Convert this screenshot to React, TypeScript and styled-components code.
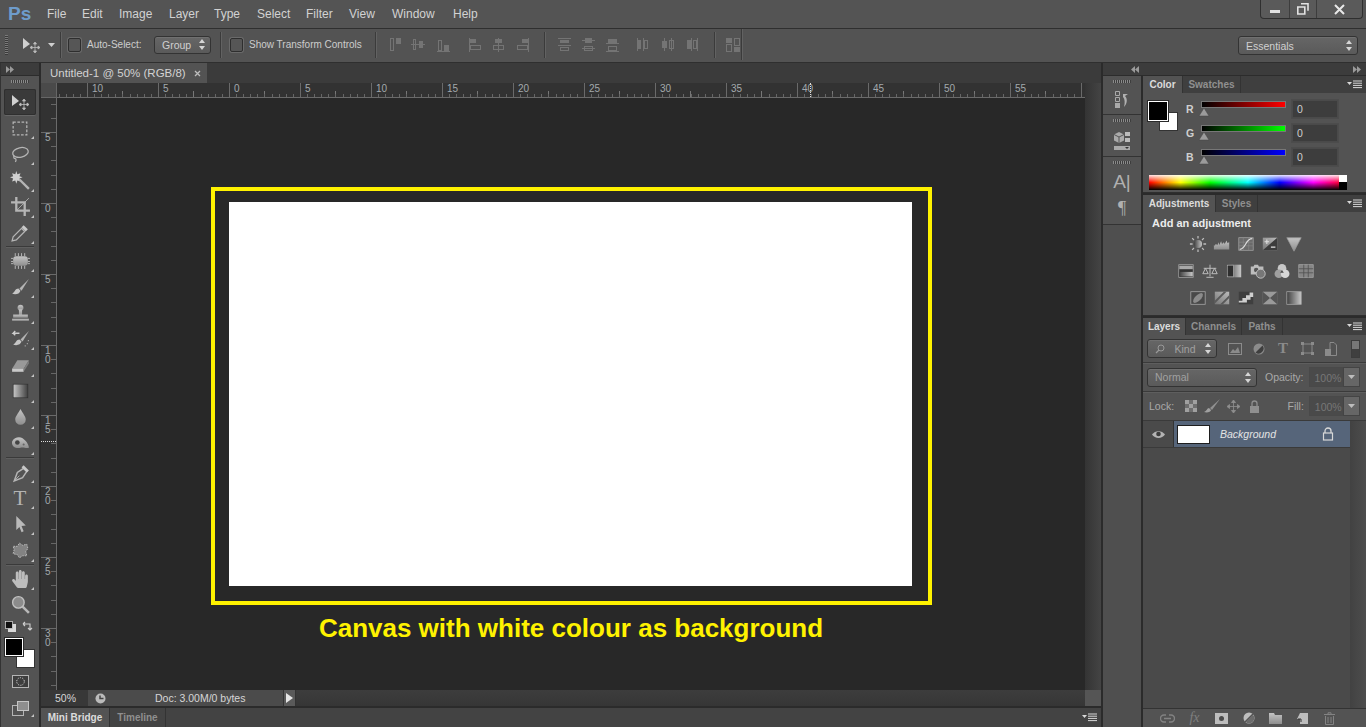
import React, { FunctionComponent, ReactNode } from 'react';
import styled, { createGlobalStyle } from 'styled-components';
import { FaHandPaper } from 'react-icons/fa';

const GlobalStyle = createGlobalStyle`
    html, body {
        margin: 0;
        padding: 0;
        background: #535353;
        font-family: "Liberation Sans", Arial, sans-serif;
    }
    * {
        box-sizing: border-box;
    }
`;

const Root = styled.div`
    width: 1366px;
    height: 727px;
    overflow: hidden;
    display: flex;
    flex-direction: column;
    background: #535353;
    color: #cfcfcf;
`;

const Svg = styled.svg<{ $w?: number; $h?: number }>`
    width: ${(p) => p.$w || 18}px;
    height: ${(p) => p.$h || p.$w || 18}px;
    display: block;
    flex: none;
`;

/* ---------- menu ---------- */
const MenuBar = styled.div`
    height: 29px;
    flex: none;
    display: flex;
    align-items: flex-start;
    border-bottom: 1px solid #2f2f2f;
    background: #545454;
`;
const Logo = styled.div`
    width: 47px;
    padding: 3px 0 0 8px;
    font-size: 19px;
    line-height: 22px;
    font-weight: bold;
    color: #6e9ccb;
`;
const MenuItem = styled.div<{ $w: number }>`
    width: ${(p) => p.$w}px;
    padding-top: 7px;
    font-size: 12px;
    line-height: 14px;
    color: #d2d2d2;
`;
const WindowButtons = styled.div`
    margin-left: auto;
    margin-right: 3px;
    height: 19px;
    display: flex;
    background: #5a5a5a;
    border: 1px solid #2f2f2f;
    border-top: 0;
    border-radius: 0 0 4px 4px;
`;
const WindowButton = styled.div<{ $w: number }>`
    width: ${(p) => p.$w}px;
    display: flex;
    align-items: center;
    justify-content: center;
    border-left: 1px solid #3d3d3d;
    &:first-child {
        border-left: 0;
    }
`;

/* ---------- options ---------- */
const OptionsBar = styled.div`
    height: 34px;
    flex: none;
    display: flex;
    align-items: center;
    padding-bottom: 2px;
    border-bottom: 1px solid #2f2f2f;
    background: #535353;
    position: relative;
`;
const OptionsGrip = styled.div`
    width: 3px;
    height: 20px;
    margin: 0 13px 0 5px;
    background: repeating-linear-gradient(180deg, #7a7a7a 0 1px, #3a3a3a 1px 2px);
`;
const OptionsDivider = styled.div<{ $ml: number; $mr: number; $tall?: boolean }>`
    width: 1px;
    align-self: ${(p) => (p.$tall ? 'stretch' : 'center')};
    height: ${(p) => (p.$tall ? 'auto' : '26px')};
    margin: ${(p) => (p.$tall ? '0 0 -2px' : '0')} ${(p) => p.$mr}px ${(p) => (p.$tall ? '-2px' : '0')} ${(p) => p.$ml}px;
    background: #3b3b3b;
    box-shadow: 1px 0 0 #626262;
`;
const Caret = styled(Svg)`
    margin-left: 7px;
`;
const Check = styled.div`
    width: 13px;
    height: 14px;
    flex: none;
    border: 1px solid #2e2e2e;
    border-radius: 2px;
    background: #565656;
    box-shadow: 0 0 0 1px #6a6a6a;
`;
const OptionLabel = styled.span<{ $ml: number; $w?: number }>`
    margin-left: ${(p) => p.$ml}px;
    width: ${(p) => (p.$w ? `${p.$w}px` : 'auto')};
    font-size: 10px;
    color: #cdcdcd;
    white-space: nowrap;
`;
const SelectBox = styled.div<{ $w: number; $h?: number; $dim?: boolean }>`
    width: ${(p) => p.$w}px;
    height: ${(p) => p.$h || 19}px;
    flex: none;
    display: flex;
    align-items: center;
    justify-content: space-between;
    padding: 0 5px 0 7px;
    font-size: 10.5px;
    color: ${(p) => (p.$dim ? '#a0a0a0' : '#d0d0d0')};
    background: linear-gradient(180deg, #666 0%, #5a5a5a 100%);
    border: 1px solid #333;
    border-radius: 3px;
    box-shadow: inset 0 1px 0 #707070;
`;
const Stepper = () => (
    <Svg $w={6} $h={11} viewBox='0 0 6 11'>
        <path d='M3 0l3 4H0zM3 11L0 7h6z' fill='#d5d5d5' />
    </Svg>
);
const AlignSlot = styled.div<{ $ml: number }>`
    margin-left: ${(p) => p.$ml}px;
`;
const WorkspaceSelect = styled(SelectBox)`
    position: absolute;
    right: 8px;
    top: 7px;
`;

/* ---------- workspace ---------- */
const Workspace = styled.div`
    flex: 1;
    min-height: 0;
    display: flex;
    background: #2b2b2b;
`;
const Strip = styled.div<{ $right?: boolean }>`
    height: 13px;
    flex: none;
    display: flex;
    align-items: center;
    justify-content: ${(p) => (p.$right ? 'space-between' : 'flex-start')};
    background: #3c3c3c;
    border-bottom: 1px solid #2c2c2c;
    padding: ${(p) => (p.$right ? '0 5px 0 28px' : '0 0 0 5px')};
`;
const DoubleArrow = ({ left }: { left?: boolean }) => (
    <Svg $w={8} $h={7} viewBox='0 0 8 7'>
        <path d={left ? 'M4 0v7L0 3.500zM8 0v7L4 3.500z' : 'M0 0v7l4-3.500zM4 0v7l4-3.500z'} fill='#9a9a9a' />
    </Svg>
);
const Grip = styled.div`
    width: 18px;
    height: 3px;
    flex: none;
    margin: 4px auto 5px;
    background: repeating-linear-gradient(90deg, #8a8a8a 0 1px, #3d3d3d 1px 2px);
`;
const ToolGrip = styled(Grip)`
    margin-bottom: 6px;
`;

/* tools */
const ToolsColumn = styled.div`
    width: 39px;
    flex: none;
    margin-right: 2px;
    display: flex;
    flex-direction: column;
    background: #535353;
    border-left: 1px solid #333;
`;
const ToolButton = styled.div<{ $active?: boolean; $flyout?: boolean }>`
    height: 26.150px;
    flex: none;
    margin: 0 3px;
    display: flex;
    align-items: center;
    justify-content: center;
    position: relative;
    border-radius: 2px;
    ${(p) =>
        p.$active
            ? 'background: #3a3a3a; box-shadow: inset 0 0 0 1px #2f2f2f, 0 1px 0 #666;'
            : ''}
    ${(p) =>
        p.$flyout
            ? `&::after {
                content: '';
                position: absolute;
                right: 2px;
                bottom: 2px;
                border-style: solid;
                border-width: 0 0 3px 3px;
                border-color: transparent transparent #c4c4c4 transparent;
            }`
            : ''}
`;
const ModeButton = styled(ToolButton)`
    margin: 0;
    width: 32px;
    height: 20px;
`;
const ToolRule = styled.div`
    height: 2px;
    flex: none;
    margin: 0 5px;
    border-top: 1px solid #3a3a3a;
    border-bottom: 1px solid #5f5f5f;
`;
const ToolLetter = styled.span`
    font-family: "Liberation Serif", serif;
    font-size: 21px;
    line-height: 21px;
    color: #b4b4b4;
`;
const SmallColors = styled.div`
    height: 16px;
    margin: 1px 6px 0 4px;
    flex: none;
    display: flex;
    align-items: center;
    justify-content: space-between;
`;
const ColorStack = styled.div`
    width: 30px;
    height: 30px;
    flex: none;
    margin: 3px 0 0 4px;
    position: relative;
`;
const ColorChip = styled.div<{ $color: string; $front?: boolean; $size: number }>`
    position: absolute;
    width: ${(p) => p.$size}px;
    height: ${(p) => p.$size}px;
    background: ${(p) => p.$color};
    border: 1px solid ${(p) => (p.$front ? '#fff' : '#333')};
    ${(p) =>
        p.$front
            ? 'left: 0; top: 0; z-index: 1; box-shadow: 0 0 0 1px #2a2a2a;'
            : 'right: 0; bottom: 0;'}
`;
const ModeSlot = styled.div<{ $mt: number }>`
    margin-top: ${(p) => p.$mt}px;
    flex: none;
    display: flex;
    justify-content: center;
`;

/* document */
const DocColumn = styled.div`
    width: 1060px;
    flex: none;
    display: flex;
    flex-direction: column;
`;
const TabBar = styled.div`
    height: 20px;
    flex: none;
    display: flex;
    background: #3b3b3b;
`;
const DocTab = styled.div`
    width: 166px;
    display: flex;
    align-items: center;
    justify-content: space-between;
    padding: 0 6px 0 9px;
    background: #535353;
    font-size: 11.5px;
    font-weight: 500;
    color: #d2d2d2;
    white-space: nowrap;
`;
const DocBody = styled.div`
    flex: 1;
    min-height: 0;
    display: flex;
`;
const DocInner = styled.div`
    width: 1044px;
    flex: none;
    display: flex;
    flex-direction: column;
`;
const RulerRow = styled.div`
    height: 15px;
    flex: none;
    display: flex;
    background: #323232;
`;
const RulerCorner = styled.div`
    width: 16px;
    flex: none;
    background: #4a4a4a;
    background-image: radial-gradient(#5c5c5c 0.5px, transparent 0.6px);
    background-size: 2px 2px;
    border-bottom: 1px solid #666;
    border-right: 1px solid #666;
`;
const TopRuler = styled.div`
    flex: 1;
    display: flex;
    overflow: hidden;
    position: relative;
    border-bottom: 1px solid #6a6a6a;
`;
const TopCell = styled.div<{ $lead?: number }>`
    width: 71px;
    flex: none;
    margin-left: ${(p) => p.$lead || 0}px;
    padding: 0 0 0 4px;
    font-size: 10px;
    line-height: 12px;
    color: #a3a9ad;
    border-left: 1px solid #6a6a6a;
    background-image:
        repeating-linear-gradient(90deg, transparent 0 6.100px, #666 6.100px 7.100px),
        linear-gradient(90deg, transparent 34px, #777 34px 35px, transparent 35px);
    background-size: 100% 3px, 100% 6px;
    background-position: bottom left, bottom left;
    background-repeat: no-repeat;
`;
const Marker = styled.div`
    position: absolute;
    top: 0;
    bottom: 0;
    left: 753px;
    border-left: 1px dotted #ddd;
`;
const MainRow = styled.div`
    flex: 1;
    min-height: 0;
    display: flex;
`;
const LeftRuler = styled.div`
    width: 16px;
    flex: none;
    overflow: hidden;
    position: relative;
    background: #323232;
    border-right: 1px solid #6a6a6a;
`;
const LeftCell = styled.div<{ $lead?: number }>`
    height: 70.900px;
    margin-top: ${(p) => p.$lead || 0}px;
    padding: 0 0 0 4px;
    border-top: 1px solid #6a6a6a;
    background-image: repeating-linear-gradient(180deg, transparent 0 13.200px, #666 13.200px 14.180px);
    background-size: 5px 100%;
    background-position: top right;
    background-repeat: no-repeat;
`;
const LeftLabel = styled.div`
    width: 7px;
    word-break: break-all;
    font-size: 10px;
    line-height: 9px;
    color: #a3a9ad;
`;
const LeftMarker = styled.div`
    position: absolute;
    left: 0;
    right: 0;
    top: 343px;
    border-top: 1px dotted #ddd;
`;
const Pasteboard = styled.div`
    flex: 1;
    min-width: 0;
    padding-top: 89px;
    display: flex;
    flex-direction: column;
    align-items: center;
    background: #282828;
`;
const Highlight = styled.div`
    width: 721px;
    height: 418px;
    flex: none;
    padding: 11px 16px 15px 14px;
    border: 4px solid #fff200;
    margin-left: 1px;
`;
const CanvasSheet = styled.div`
    width: 100%;
    height: 100%;
    background: #fff;
`;
const Caption = styled.div`
    margin-top: 8px;
    font-size: 26px;
    line-height: 30px;
    font-weight: bold;
    color: #fff200;
    white-space: nowrap;
`;
const ScrollTrack = styled.div`
    width: 16px;
    flex: none;
    background: linear-gradient(90deg, #343434, #444);
`;
const StatusBar = styled.div`
    height: 16px;
    flex: none;
    display: flex;
    align-items: stretch;
    background: #383838;
    font-size: 10.5px;
    line-height: 16px;
    color: #d6d6d6;
`;
const ZoomValue = styled.div`
    width: 47px;
    padding-left: 14px;
`;
const StatusIcon = styled.div`
    width: 24px;
    display: flex;
    align-items: center;
    justify-content: center;
    background: #4b4b4b;
`;
const DocSize = styled.div`
    width: 171px;
    padding-left: 43px;
    background: #4b4b4b;
`;
const StatusArrow = styled.div`
    width: 13px;
    display: flex;
    align-items: center;
    justify-content: center;
    background: #5a5a5a;
    border-left: 1px solid #333;
    border-right: 1px solid #333;
`;
const StatusRest = styled.div`
    flex: 1;
    background: linear-gradient(180deg, #3d3d3d, #363636);
`;
const StatusCorner = styled.div`
    width: 16px;
    background: #555;
`;
const BottomPanel = styled.div`
    height: 19px;
    flex: none;
    margin-top: 2px;
    display: flex;
    align-items: stretch;
    background: #434343;
    padding-right: 4px;
`;

/* panels */
const Tab = styled.div<{ $active?: boolean; $w: number }>`
    width: ${(p) => p.$w}px;
    flex: none;
    display: flex;
    align-items: center;
    justify-content: center;
    padding-bottom: 1px;
    font-size: 10px;
    font-weight: bold;
    color: ${(p) => (p.$active ? '#dcdcdc' : '#8f8f8f')};
    background: ${(p) => (p.$active ? '#535353' : 'transparent')};
    border-right: 1px solid #333;
`;
const Side = styled.div`
    width: 263px;
    flex: none;
    margin-left: 2px;
    display: flex;
    flex-direction: column;
`;
const SideRow = styled.div`
    flex: 1;
    min-height: 0;
    display: flex;
`;
const Dock = styled.div`
    width: 38px;
    flex: none;
    margin-right: 2px;
    background: #4f4f4f;
    display: flex;
    flex-direction: column;
`;
const DockGroup = styled.div<{ $h: number }>`
    height: ${(p) => p.$h}px;
    display: flex;
    flex-direction: column;
    align-items: center;
    background: #535353;
    border-bottom: 1px solid #333;
`;
const DockIcon = styled.div<{ $mt: number }>`
    margin-top: ${(p) => p.$mt}px;
`;
const DockLetter = styled.div<{ $serif?: boolean }>`
    height: 26px;
    display: flex;
    align-items: center;
    font-family: ${(p) => (p.$serif ? '"Liberation Serif", serif' : '"Liberation Sans", sans-serif')};
    font-size: ${(p) => (p.$serif ? 18 : 19)}px;
    color: #b0b0b0;
`;
const PanelColumn = styled.div`
    width: 223px;
    flex: none;
    display: flex;
    flex-direction: column;
`;
const PanelHead = styled.div`
    height: 17px;
    flex: none;
    display: flex;
    background: #3f3f3f;
    padding-right: 4px;
`;
const HeadMenu = styled.div`
    margin-left: auto;
    display: flex;
    align-items: center;
`;
const Panel = styled.section<{ $h?: number; $grow?: boolean }>`
    height: ${(p) => (p.$h ? `${p.$h}px` : 'auto')};
    flex: ${(p) => (p.$grow ? '1' : 'none')};
    min-height: 0;
    display: flex;
    flex-direction: column;
    background: #535353;
    border-bottom: ${(p) => (p.$grow ? '0' : '1px solid #2f2f2f')};
    margin-bottom: ${(p) => (p.$grow ? '0' : '2px')};
`;
const ColorBody = styled.div`
    flex: 1;
    padding: 8px 5px 0 5px;
    display: flex;
    flex-direction: column;
`;
const ColorTop = styled.div`
    display: flex;
`;
const SwatchPair = styled.div`
    width: 30px;
    height: 30px;
    flex: none;
    position: relative;
    margin-right: 8px;
`;
const Channels = styled.div`
    display: flex;
    flex-direction: column;
    gap: 6px;
    margin-top: -1px;
`;
const ChannelRow = styled.div`
    height: 18px;
    display: flex;
    align-items: flex-start;
`;
const ChannelLetter = styled.div`
    width: 15px;
    padding-top: 3px;
    font-size: 10.5px;
    font-weight: bold;
    color: #cfcfcf;
`;
const SliderWrap = styled.div`
    width: 85px;
    height: 18px;
    position: relative;
`;
const SliderBar = styled.div<{ $color: string }>`
    height: 7px;
    margin-top: 1px;
    border: 1px solid #777;
    background: linear-gradient(90deg, #000, ${(p) => p.$color});
`;
const SliderThumb = styled.div`
    position: absolute;
    left: -3px;
    top: 8px;
`;
const ValueBox = styled.div<{ $w?: number }>`
    width: ${(p) => p.$w || 46}px;
    height: 18px;
    margin-left: 6px;
    padding: 3px 0 0 5px;
    font-size: 10.5px;
    color: #d0d0d0;
    background: #3d3d3d;
    box-shadow: inset 0 0 0 1px #4a4a4a, 0 0 0 1px #4c4c4c;
`;
const Spectrum = styled.div`
    width: 198px;
    height: 15px;
    margin: 9px 0 0 1px;
    position: relative;
    background:
        linear-gradient(180deg, rgba(255, 255, 255, 0.9) 0%, rgba(255, 255, 255, 0) 50%, rgba(0, 0, 0, 0) 50%, #000 100%),
        linear-gradient(90deg, #f00 0%, #ff0 16%, #0f0 31%, #0ff 50%, #00f 66%, #f0f 83%, #f00 100%);
    &::after {
        content: '';
        position: absolute;
        right: 0;
        top: 0;
        bottom: 0;
        width: 8px;
        background: linear-gradient(180deg, #fff 50%, #000 50%);
    }
`;
const AdjTitle = styled.div`
    padding: 4px 0 0 9px;
    font-size: 11px;
    line-height: 14px;
    font-weight: bold;
    color: #ececec;
`;
const AdjGrid = styled.div`
    margin-top: 0;
    padding-right: 17px;
    display: flex;
    flex-direction: column;
    align-items: center;
`;
const AdjRow = styled.div`
    height: 27px;
    display: flex;
    align-items: center;
`;
const AdjCell = styled.div`
    width: 24px;
    display: flex;
    justify-content: center;
`;
const LayerControl = styled.div<{ $h: number }>`
    height: ${(p) => p.$h}px;
    flex: none;
    display: flex;
    align-items: center;
    padding: 0 6px 0 4px;
    border-bottom: 1px solid #3a3a3a;
    box-shadow: 0 1px 0 #5e5e5e;
`;
const FilterIcon = styled.div`
    width: 24px;
    display: flex;
    justify-content: center;
    font-family: "Liberation Serif", serif;
    font-size: 15px;
    font-weight: bold;
    color: #8b8b8b;
`;
const FilterGap = styled.div<{ $w: number }>`
    width: ${(p) => p.$w}px;
    flex: none;
`;
const FilterToggle = styled.div`
    width: 9px;
    height: 18px;
    margin-left: 8px;
    border: 1px solid #3c3c3c;
    background: linear-gradient(180deg, #777 50%, #3f3f3f 50%);
`;
const DimLabel = styled.span<{ $ml: number }>`
    margin-left: ${(p) => p.$ml}px;
    font-size: 10.5px;
    color: #a9a9a9;
    white-space: nowrap;
`;
const FxLabel = styled.span`
    font-family: "Liberation Serif", serif;
    font-style: italic;
    font-size: 14px;
    color: #7f7f7f;
`;
const DimInput = styled.div`
    width: 35px;
    height: 20px;
    margin-left: 5px;
    padding: 4px 0 0 5px;
    font-size: 10.5px;
    color: #777;
    background: #4a4a4a;
    border: 1px solid #494949;
`;
const DimArrow = styled.div`
    width: 18px;
    height: 20px;
    display: flex;
    align-items: center;
    justify-content: center;
    background: #666;
    border: 1px solid #444;
`;
const LockIcon = styled.div`
    width: 22.300px;
    display: flex;
    justify-content: center;
`;
const LayerList = styled.div`
    flex: 1;
    min-height: 0;
    display: flex;
    background: #4a4a4a;
`;
const LayerColumn = styled.div`
    width: 207px;
    flex: none;
`;
const LayerRow = styled.div`
    height: 27px;
    display: flex;
    align-items: center;
    background: #56657a;
    border-bottom: 1px solid #3a3a3a;
`;
const EyeCell = styled.div`
    width: 31px;
    height: 100%;
    flex: none;
    display: flex;
    align-items: center;
    justify-content: center;
    background: #4a4a4a;
    border-right: 1px solid #333;
`;
const LayerThumb = styled.div`
    width: 33px;
    height: 19px;
    margin-left: 3px;
    flex: none;
    background: #fff;
    border: 1px solid #1e1e1e;
`;
const LayerName = styled.div`
    margin-left: 10px;
    font-size: 10.5px;
    font-style: italic;
    color: #e4e4e4;
`;
const LayerLock = styled.div`
    margin-left: auto;
    margin-right: 16px;
`;
const LayerScroll = styled.div`
    flex: 1;
    background: linear-gradient(90deg, #424242, #4d4d4d);
`;
const LayerFooter = styled.div`
    height: 19px;
    flex: none;
    display: flex;
    align-items: center;
    padding-left: 11px;
    border-top: 1px solid #333;
`;
const FooterCell = styled.div`
    width: 27px;
    display: flex;
    justify-content: center;
`;

/* ---------- drawings ---------- */
const PanelMenuIcon = () => (
    <Svg $w={15} $h={9} viewBox='0 0 15 9'>
        <path d='M0 2h5L2.500 5z' fill='#d8d8d8' />
        <path d='M6 1h9M6 3.200h9M6 5.400h9M6 7.600h9' stroke='#d8d8d8' strokeWidth='1' />
    </Svg>
);

const Defs = styled.svg`
    position: absolute;
    width: 0;
    height: 0;
`;
const SharedGradients = () => (
    <Defs>
        <defs>
            <linearGradient id='toolGrey' x1='0' y1='0' x2='0' y2='1'>
                <stop offset='0' stopColor='#c4c4c4' />
                <stop offset='1' stopColor='#8e8e8e' />
            </linearGradient>
            <linearGradient id='sideGrey' x1='0' y1='0' x2='1' y2='0'>
                <stop offset='0' stopColor='#3f3f3f' />
                <stop offset='1' stopColor='#c8c8c8' />
            </linearGradient>
            <linearGradient id='diagGrey' x1='0' y1='1' x2='1' y2='0'>
                <stop offset='0' stopColor='#777' />
                <stop offset='1' stopColor='#bbb' />
            </linearGradient>
        </defs>
    </Defs>
);

const G = 'url(#toolGrey)';
const L = '#b5b5b5';

const toolIcons: Record<string, ReactNode> = {
    marquee: <rect x='3' y='4' width='13' height='12' fill='none' stroke={L} strokeWidth='1.200' strokeDasharray='2.500 1.500' />,
    lasso: (
        <g fill='none' stroke={L} strokeWidth='1.200'>
            <ellipse cx='10' cy='8' rx='7.500' ry='4.500' transform='rotate(-12 10 8)' />
            <path d='M4 11c-1 2 0 3 1 3s1 2 0 3' />
        </g>
    ),
    wand: (
        <g>
            <path d='M6 1l1 3 3-1-1 3 3 1-3 1 1 3-3-1-1 3-1-3-3 1 1-3-3-1 3-1-1-3 3 1z' fill='#d0d0d0' />
            <path d='M9 9l9 9' stroke={L} strokeWidth='2.200' />
        </g>
    ),
    crop: (
        <g fill='none' stroke={L} strokeWidth='2.200'>
            <path d='M6 1v13h13M1 6h13v13' />
            <path d='M6 14L18 2' strokeWidth='0.800' />
        </g>
    ),
    dropper: (
        <g>
            <path d='M13 3l4 4-2 2-4-4z' fill='#c9c9c9' />
            <path d='M11 6l3 3-8 8-4 1 1-4z' fill='none' stroke={L} strokeWidth='1.200' />
        </g>
    ),
    heal: (
        <g>
            <rect x='3' y='6' width='14' height='9' rx='3' fill={G} />
            <path d='M5 3v3M8 3v3M11 3v3M14 3v3M5 15v3M8 15v3M11 15v3M14 15v3M1 8h2M1 11h2M1 13h2M17 8h2M17 11h2M17 13h2' stroke='#bbb' strokeWidth='0.900' />
        </g>
    ),
    brush: (
        <g>
            <path d='M18 2L9 11l2 2z' fill='#b5b5b5' />
            <path d='M8 11c-3 0-3 3-6 5 4 1 7 0 8-3z' fill='#c5c5c5' />
        </g>
    ),
    stamp: (
        <g fill={G}>
            <circle cx='10' cy='4.500' r='2.800' />
            <rect x='8.500' y='6' width='3' height='6' />
            <rect x='3' y='11' width='14' height='3' />
            <rect x='2' y='15' width='16' height='2' />
        </g>
    ),
    history: (
        <g>
            <path d='M18 2l-8 8 2 2z' fill='#b5b5b5' />
            <path d='M9 10c-3 0-3 3-6 5 4 1 7 0 8-3z' fill='#c5c5c5' />
            <path d='M9 4H3l2-2M3 4l2 2' fill='none' stroke='#ccc' strokeWidth='1.300' />
            <path d='M14 16h1M16 14h1M17 11h1' stroke='#aaa' strokeWidth='1.200' />
        </g>
    ),
    eraser: (
        <g>
            <path d='M7 5h11l-5 8H2z' fill='#999' />
            <path d='M2 13h11v3H2z' fill='#c9c9c9' />
            <path d='M13 13l5-8v3l-5 8z' fill='#7c7c7c' />
        </g>
    ),
    gradient: <rect x='3' y='3' width='14' height='13' fill='url(#sideGrey)' stroke='#2f2f2f' strokeWidth='0.600' transform='rotate(180 10 9.500)' />,
    blur: <path d='M10 2c2 4 5 7 5 10a5 5 0 0 1-10 0c0-3 3-6 5-10z' fill={G} />,
    sponge: (
        <g>
            <path d='M2 8c2-4 7-5 10-3s6 6 6 9c-3 1-5-1-8 0-4 1-9-1-8-6z' fill={G} />
            <circle cx='7' cy='9' r='2.200' fill='#444' />
            <circle cx='13' cy='11' r='1' fill='#666' />
        </g>
    ),
    pen: (
        <g>
            <path d='M13 6l3 3-4 6-8 3 3-8z' fill='none' stroke={L} strokeWidth='1.400' />
            <path d='M13 3l5 5-2 2-5-5z' fill='#c8c8c8' />
            <path d='M4 18l5-5' stroke={L} strokeWidth='0.900' />
        </g>
    ),
    path: <path d='M6 2l9 9-4 .500 2 5-2 .800-2-5-3 3z' fill='#b9b9b9' />,
    shape: (
        <path d='M9 3l3 2 4-1 1 4-2 3 1 4-4 0-3 2-2-3-4-1 1-4-1-3 4 0z' fill='#838383' stroke='#bdbdbd' strokeWidth='0.900' strokeDasharray='1.500 1' />
    ),
    zoom: (
        <g>
            <circle cx='8' cy='8' r='5.500' fill='#8c8c8c' stroke='#c2c2c2' strokeWidth='1.300' />
            <path d='M12 12l6 6' stroke='#b9b9b9' strokeWidth='2.400' />
        </g>
    ),
};

type ToolEntry = { id: string; rule?: boolean; flyout?: boolean };
const tools: ToolEntry[] = [
    { id: 'marquee', flyout: true },
    { id: 'lasso', flyout: true },
    { id: 'wand', flyout: true },
    { id: 'crop', flyout: true },
    { id: 'dropper', flyout: true, rule: true },
    { id: 'heal', flyout: true },
    { id: 'brush', flyout: true },
    { id: 'stamp', flyout: true },
    { id: 'history', flyout: true },
    { id: 'eraser', flyout: true },
    { id: 'gradient', flyout: true },
    { id: 'blur', flyout: true },
    { id: 'sponge', flyout: true, rule: true },
    { id: 'pen', flyout: true },
    { id: 'type', flyout: true },
    { id: 'path', flyout: true },
    { id: 'shape', flyout: true, rule: true },
    { id: 'hand', flyout: true },
    { id: 'zoom' },
];

const MoveIcon = () => (
    <Svg $w={20} $h={18} viewBox='0 0 20 18'>
        <path d='M2 2v11l7-5z' fill='#d0d0d0' />
        <path d='M14 7v9M9.500 11.500h9M14 6l-1.500 2h3zM14 17l-1.500-2h3zM9 11.500l2-1.500v3zM19 11.500l-2-1.500v3z' stroke='#bdbdbd' strokeWidth='0.800' fill='#bdbdbd' />
    </Svg>
);

type AlignRect = [number, number, number, number, boolean];
const alignIcons: AlignRect[][] = [
    [[2, 1, 4, 13, false], [8, 1, 5, 6, true]],
    [[1, 7, 14, 1, true], [3, 2, 3, 11, false], [9, 4, 4, 7, true]],
    [[2, 3, 4, 11, false], [8, 8, 5, 6, true], [1, 14, 13, 1, true]],
    [[2, 1, 1, 14, true], [3, 2, 6, 4, true], [3, 8, 11, 5, false]],
    [[7, 1, 1, 14, true], [4, 2, 7, 4, true], [2, 8, 11, 5, false]],
    [[13, 1, 1, 14, true], [7, 2, 6, 4, true], [2, 8, 11, 5, false]],
    [[1, 1, 13, 1, true], [3, 3, 9, 3, true], [1, 8, 13, 1, true], [3, 10, 9, 4, false]],
    [[1, 3, 13, 1, true], [4, 1, 7, 5, true], [1, 11, 13, 1, true], [3, 9, 9, 5, false]],
    [[1, 6, 13, 1, true], [3, 2, 9, 4, true], [1, 14, 13, 1, true], [3, 9, 9, 5, false]],
    [[2, 1, 1, 13, true], [3, 3, 3, 9, true], [8, 1, 1, 13, true], [9, 3, 4, 9, false]],
    [[4, 1, 1, 13, true], [2, 4, 5, 7, true], [11, 1, 1, 13, true], [9, 3, 5, 9, false]],
    [[7, 1, 1, 13, true], [3, 3, 4, 9, true], [13, 1, 1, 13, true], [9, 3, 4, 9, false]],
    [[1, 1, 6, 5, true], [1, 7, 6, 8, false], [9, 1, 6, 8, false], [9, 10, 6, 5, true]],
];

const AlignIcon = ({ rects }: { rects: AlignRect[] }) => (
    <Svg $w={16} $h={16} viewBox='0 0 16 16'>
        {rects.map(([x, y, w, h, filled], i) =>
            filled ? (
                <rect key={i} x={x} y={y} width={w} height={h} fill='#747474' />
            ) : (
                <rect key={i} x={x + 0.5} y={y + 0.5} width={w - 1} height={h - 1} fill='none' stroke='#747474' />
            )
        )}
    </Svg>
);

const adjIcons: ReactNode[][] = [
    [
        <g key='sun'>
            <circle cx='10' cy='10' r='4.500' fill='url(#sideGrey)' />
            <path d='M10 1v3M10 16v3M1 10h3M16 10h3M3.500 3.500l2 2M14.500 14.500l2 2M3.500 16.500l2-2M14.500 5.500l2-2' stroke='#bdbdbd' strokeWidth='1.400' />
        </g>,
        <path key='lev' d='M1 16V11l1 1 1-2 2 1 1-3 1 3 2-4 1 3 2-2 1 2 2-4 1 3 2-1v8z' fill={G} />,
        <g key='curve'>
            <rect x='2' y='3' width='16' height='14' fill='#6a6a6a' stroke='#a5a5a5' strokeWidth='0.800' />
            <path d='M7 3v14M13 3v14M2 8h16M2 12h16' stroke='#8a8a8a' strokeWidth='0.600' />
            <path d='M3 16c7 0 6-12 14-12' fill='none' stroke='#ddd' strokeWidth='1.300' />
        </g>,
        <g key='exp'>
            <rect x='2' y='3' width='16' height='14' fill='url(#diagGrey)' />
            <path d='M2 17L18 3v14z' fill='#3c3c3c' />
            <path d='M4 7.500h5M6.500 5v5M11 13.500h5' stroke='#e0e0e0' strokeWidth='1.200' />
        </g>,
        <path key='vib' d='M2 3h16l-8 15z' fill={G} stroke='#999' strokeWidth='0.800' />,
    ],
    [
        <g key='hsl'>
            <rect x='2' y='3' width='16' height='14' fill='#333' stroke='#b0b0b0' strokeWidth='0.800' />
            <path d='M2.500 4h15v4h-15z' fill='#a8a8a8' />
            <path d='M2.500 11h15v5h-15z' fill='url(#sideGrey)' />
        </g>,
        <g key='bal' fill='none' stroke='#bdbdbd' strokeWidth='1.100'>
            <path d='M10 3v13M3 7h14M6 17h8' />
            <path d='M5 7l-3 6h6zM15 7l-3 6h6z' />
        </g>,
        <g key='bw'>
            <rect x='2' y='3' width='16' height='14' fill='url(#sideGrey)' />
            <rect x='2.500' y='3.500' width='7' height='13' fill='#2f2f2f' stroke='#bbb' strokeWidth='0.700' />
        </g>,
        <g key='photo'>
            <path d='M2 5h3l1-2h4l1 2h5v9H2z' fill='#bdbdbd' />
            <circle cx='8' cy='9' r='2.500' fill='#555' />
            <circle cx='13' cy='13' r='5' fill='#777' stroke='#bdbdbd' strokeWidth='1.100' />
        </g>,
        <g key='mix'>
            <circle cx='10' cy='7' r='4.800' fill='#c8c8c8' />
            <circle cx='6.500' cy='13' r='4.800' fill='#9f9f9f' />
            <circle cx='13.500' cy='13' r='4.800' fill='#d6d6d6' />
            <path d='M10 9l-2 3h4z' fill='#4a4a4a' />
        </g>,
        <g key='lut'>
            <rect x='2' y='3' width='16' height='14' fill='#858585' stroke='#aaa' strokeWidth='0.800' />
            <path d='M7.500 3v14M12.500 3v14M2 7.500h16M2 12h16' stroke='#4f4f4f' strokeWidth='0.900' />
        </g>,
    ],
    [
        <g key='inv'>
            <rect x='2' y='3' width='16' height='14' fill='#494949' stroke='#a5a5a5' strokeWidth='0.900' />
            <ellipse cx='10' cy='10' rx='7' ry='3.200' transform='rotate(-45 10 10)' fill='#8b8b8b' />
        </g>,
        <g key='post'>
            <rect x='2' y='3' width='16' height='14' fill='url(#diagGrey)' />
            <path d='M2 13L12 3h3L2 16zM8 17L18 7v3l-7 7z' fill='#5a5a5a' />
        </g>,
        <g key='thr'>
            <rect x='2' y='3' width='16' height='14' fill='#3f3f3f' />
            <path d='M2 13h4v-3h4V7h4V4h4v5h-3v3h-4v3H2z' fill='#cfcfcf' />
        </g>,
        <g key='sel'>
            <rect x='2' y='3' width='16' height='14' fill='#9a9a9a' />
            <path d='M2 3l8 7-8 7zM18 3l-8 7 8 7z' fill='#555' />
        </g>,
        <rect key='map' x='2' y='3' width='16' height='14' fill='url(#sideGrey)' stroke='#aaa' strokeWidth='0.800' />,
    ],
];

const SmallLock = ({ color }: { color: string }) => (
    <Svg $w={12} $h={14} viewBox='0 0 12 14'>
        <path d='M3 6V4a3 3 0 0 1 6 0v2' fill='none' stroke={color} strokeWidth='1.300' />
        <rect x='1.500' y='6' width='9' height='7' fill='none' stroke={color} strokeWidth='1.200' />
    </Svg>
);

const ThumbIcon = () => (
    <Svg $w={12} $h={10} viewBox='0 0 12 10'>
        <path d='M6 0l5 8H1z' fill='#9b9b9b' stroke='#444' strokeWidth='0.500' />
    </Svg>
);

const Channel = ({ letter, color }: { letter: string; color: string }) => (
    <ChannelRow>
        <ChannelLetter>{letter}</ChannelLetter>
        <SliderWrap>
            <SliderBar $color={color} />
            <SliderThumb>
                <ThumbIcon />
            </SliderThumb>
        </SliderWrap>
        <ValueBox>0</ValueBox>
    </ChannelRow>
);

const menuItems: [string, number][] = [
    ['File', 35],
    ['Edit', 37],
    ['Image', 50],
    ['Layer', 45],
    ['Type', 43],
    ['Select', 49],
    ['Filter', 43],
    ['View', 43],
    ['Window', 61],
    ['Help', 40],
];

const alignGaps = [12, 6, 10, 15, 8, 8, 12, 8, 8, 14, 9, 8, 10];
const topLabels = ['', '10', '5', '0', '5', '10', '15', '20', '25', '30', '35', '40', '45', '50', '55', ''];
const leftLabels = ['', '5', '0', '5', '10', '15', '20', '25', '30'];

const App: FunctionComponent = () => {
    return (
        <Root>
            <GlobalStyle />
            <SharedGradients />
            <MenuBar>
                <Logo>Ps</Logo>
                {menuItems.map(([label, w]) => (
                    <MenuItem key={label} $w={w}>
                        {label}
                    </MenuItem>
                ))}
                <WindowButtons>
                    <WindowButton $w={28}>
                        <Svg $w={10} $h={10} viewBox='0 0 10 10'>
                            <rect x='0' y='6' width='10' height='3' fill='#e2e2e2' />
                        </Svg>
                    </WindowButton>
                    <WindowButton $w={27}>
                        <Svg $w={12} $h={12} viewBox='0 0 12 12'>
                            <path d='M4 .800h7v7M.800 4h7v7h-7z' fill='none' stroke='#e2e2e2' strokeWidth='1.600' />
                        </Svg>
                    </WindowButton>
                    <WindowButton $w={46}>
                        <Svg $w={11} $h={11} viewBox='0 0 11 11'>
                            <path d='M1 1l9 9M10 1l-9 9' stroke='#e8e8e8' strokeWidth='2' />
                        </Svg>
                    </WindowButton>
                </WindowButtons>
            </MenuBar>

            <OptionsBar>
                <OptionsGrip />
                <MoveIcon />
                <Caret $w={7} $h={4} viewBox='0 0 7 4'>
                    <path d='M0 0h7L3.500 4z' fill='#d0d0d0' />
                </Caret>
                <OptionsDivider $ml={5} $mr={7} />
                <Check />
                <OptionLabel $ml={6} $w={67}>
                    Auto-Select:
                </OptionLabel>
                <SelectBox $w={57} $h={18}>
                    Group
                    <Stepper />
                </SelectBox>
                <OptionsDivider $ml={9} $mr={9} />
                <Check />
                <OptionLabel $ml={6} $w={126}>
                    Show Transform Controls
                </OptionLabel>
                <OptionsDivider $ml={0} $mr={0} />
                {alignIcons.map((rects, i) => (
                    <React.Fragment key={i}>
                        {i === 6 && <OptionsDivider $ml={13} $mr={0} />}
                        {i === 12 && <OptionsDivider $ml={14} $mr={0} />}
                        <AlignSlot $ml={alignGaps[i]}>
                            <AlignIcon rects={rects} />
                        </AlignSlot>
                    </React.Fragment>
                ))}
                <OptionsDivider $ml={14} $mr={0} $tall />
                <WorkspaceSelect $w={120}>
                    Essentials
                    <Stepper />
                </WorkspaceSelect>
            </OptionsBar>

            <Workspace>
                <ToolsColumn>
                    <Strip>
                        <DoubleArrow />
                    </Strip>
                    <ToolGrip />
                    <ToolButton $active>
                        <MoveIcon />
                    </ToolButton>
                    {tools.map((t) => (
                        <React.Fragment key={t.id}>
                            <ToolButton $flyout={t.flyout}>
                                {t.id === 'type' ? (
                                    <ToolLetter>T</ToolLetter>
                                ) : t.id === 'hand' ? (
                                    <FaHandPaper size={18} color='#bdbdbd' />
                                ) : (
                                    <Svg $w={21} viewBox='0 0 20 20'>
                                        {toolIcons[t.id]}
                                    </Svg>
                                )}
                            </ToolButton>
                            {t.rule && <ToolRule />}
                        </React.Fragment>
                    ))}
                    <SmallColors>
                        <Svg $w={11} $h={11} viewBox='0 0 11 11'>
                            <rect x='3' y='3' width='8' height='8' fill='#d8d8d8' />
                            <rect x='0.500' y='0.500' width='7' height='7' fill='#111' stroke='#ddd' strokeWidth='0.700' />
                        </Svg>
                        <Svg $w={11} $h={11} viewBox='0 0 11 11'>
                            <path d='M1 3h7v6M1 3l2-2M1 3l2 2M8 9l-2-2M8 9l2-2' fill='none' stroke='#d0d0d0' strokeWidth='1.100' />
                        </Svg>
                    </SmallColors>
                    <ColorStack>
                        <ColorChip $color='#000' $front $size={18} />
                        <ColorChip $color='#fff' $size={19} />
                    </ColorStack>
                    <ModeSlot $mt={7}>
                        <Svg $w={17} $h={13} viewBox='0 0 17 13'>
                            <rect x='0.500' y='0.500' width='16' height='12' fill='#3e3e3e' stroke='#b5b5b5' />
                            <circle cx='8.500' cy='6.500' r='3.800' fill='none' stroke='#d6d6d6' strokeDasharray='1.200 1.200' />
                        </Svg>
                    </ModeSlot>
                    <ModeSlot $mt={11}>
                        <ModeButton $flyout>
                            <Svg $w={17} $h={15} viewBox='0 0 17 15'>
                                <rect x='0.500' y='4.500' width='11' height='10' fill='none' stroke='#b5b5b5' />
                                <rect x='5.500' y='0.500' width='11' height='9' fill='#8e8e8e' stroke='#c4c4c4' />
                            </Svg>
                        </ModeButton>
                    </ModeSlot>
                </ToolsColumn>

                <DocColumn>
                    <TabBar>
                        <DocTab>
                            Untitled-1 @ 50% (RGB/8)
                            <Svg $w={7} $h={7} viewBox='0 0 7 7'>
                                <path d='M1 1l5 5M6 1L1 6' stroke='#bdbdbd' strokeWidth='1.300' />
                            </Svg>
                        </DocTab>
                    </TabBar>
                    <DocBody>
                        <DocInner>
                            <RulerRow>
                                <RulerCorner />
                                <TopRuler>
                                    {topLabels.map((label, i) => (
                                        <TopCell key={i} $lead={i === 0 ? -41 : 0}>
                                            {label}
                                        </TopCell>
                                    ))}
                                    <Marker />
                                </TopRuler>
                            </RulerRow>
                            <MainRow>
                                <LeftRuler>
                                    {leftLabels.map((label, i) => (
                                        <LeftCell key={i} $lead={i === 0 ? -37 : 0}>
                                            <LeftLabel>{label}</LeftLabel>
                                        </LeftCell>
                                    ))}
                                    <LeftMarker />
                                </LeftRuler>
                                <Pasteboard>
                                    <Highlight>
                                        <CanvasSheet />
                                    </Highlight>
                                    <Caption>Canvas with white colour as background</Caption>
                                </Pasteboard>
                            </MainRow>
                        </DocInner>
                        <ScrollTrack />
                    </DocBody>
                    <StatusBar>
                        <ZoomValue>50%</ZoomValue>
                        <StatusIcon>
                            <Svg $w={11} $h={11} viewBox='0 0 11 11'>
                                <circle cx='5.500' cy='5.500' r='5' fill='#bbb' />
                                <path d='M5 2.500v3h3.500' fill='none' stroke='#444' strokeWidth='1.500' />
                            </Svg>
                        </StatusIcon>
                        <DocSize>Doc: 3.00M/0 bytes</DocSize>
                        <StatusArrow>
                            <Svg $w={7} $h={10} viewBox='0 0 7 10'>
                                <path d='M0 0l7 5-7 5z' fill='#e6e6e6' />
                            </Svg>
                        </StatusArrow>
                        <StatusRest />
                        <StatusCorner />
                    </StatusBar>
                    <BottomPanel>
                        <Tab $active $w={69}>
                            Mini Bridge
                        </Tab>
                        <Tab $w={56}>Timeline</Tab>
                        <HeadMenu>
                            <PanelMenuIcon />
                        </HeadMenu>
                    </BottomPanel>
                </DocColumn>

                <Side>
                    <Strip $right>
                        <DoubleArrow left />
                        <DoubleArrow />
                    </Strip>
                    <SideRow>
                        <Dock>
                            <DockGroup $h={39}>
                                <Grip />
                                <DockIcon $mt={2}>
                                    <Svg $w={16} $h={20} viewBox='0 0 16 20'>
                                        <path d='M1.500 1.500h4v4h-4zM1.500 7.500h4v4h-4z' fill='none' stroke='#aaa' />
                                        <rect x='1' y='13' width='5' height='5' fill='#aaa' />
                                        <path d='M9 4h5l-3 2c3 3 2 8-1 11 1-4 1-8-1-10z' fill='#b0b0b0' />
                                    </Svg>
                                </DockIcon>
                            </DockGroup>
                            <DockGroup $h={42}>
                                <Grip />
                                <DockIcon $mt={4}>
                                    <Svg $w={18} $h={22} viewBox='0 0 18 22'>
                                        <path d='M6 1l5 2.500v6L6 12 1 9.500v-6z' fill='#aaa' />
                                        <path d='M6 6v6M1 3.500L6 6l5-2.500' stroke='#555' fill='none' />
                                        <rect x='12' y='1' width='5' height='4' fill='#bbb' />
                                        <rect x='12' y='7' width='5' height='4' fill='#bbb' />
                                        <rect x='1' y='15' width='16' height='4' fill='#aaa' />
                                        <path d='M12 16h4l-2 2z' fill='#333' />
                                    </Svg>
                                </DockIcon>
                            </DockGroup>
                            <DockGroup $h={68}>
                                <Grip />
                                <DockLetter>A|</DockLetter>
                                <DockLetter $serif>¶</DockLetter>
                            </DockGroup>
                        </Dock>
                        <PanelColumn>
                            <Panel $h={117}>
                                <PanelHead>
                                    <Tab $active $w={40}>
                                        Color
                                    </Tab>
                                    <Tab $w={58}>Swatches</Tab>
                                    <HeadMenu>
                                        <PanelMenuIcon />
                                    </HeadMenu>
                                </PanelHead>
                                <ColorBody>
                                    <ColorTop>
                                        <SwatchPair>
                                            <ColorChip $color='#000' $front $size={20} />
                                            <ColorChip $color='#fff' $size={19} />
                                        </SwatchPair>
                                        <Channels>
                                            <Channel letter='R' color='#f00' />
                                            <Channel letter='G' color='#0f0' />
                                            <Channel letter='B' color='#00f' />
                                        </Channels>
                                    </ColorTop>
                                    <Spectrum />
                                </ColorBody>
                            </Panel>
                            <Panel $h={121}>
                                <PanelHead>
                                    <Tab $active $w={73}>
                                        Adjustments
                                    </Tab>
                                    <Tab $w={42}>Styles</Tab>
                                    <HeadMenu>
                                        <PanelMenuIcon />
                                    </HeadMenu>
                                </PanelHead>
                                <AdjTitle>Add an adjustment</AdjTitle>
                                <AdjGrid>
                                    {adjIcons.map((row, i) => (
                                        <AdjRow key={i}>
                                            {row.map((icon, j) => (
                                                <AdjCell key={j}>
                                                    <Svg $w={18} viewBox='0 0 20 20'>
                                                        {icon}
                                                    </Svg>
                                                </AdjCell>
                                            ))}
                                        </AdjRow>
                                    ))}
                                </AdjGrid>
                            </Panel>
                            <Panel $grow>
                                <PanelHead>
                                    <Tab $active $w={43}>
                                        Layers
                                    </Tab>
                                    <Tab $w={56}>Channels</Tab>
                                    <Tab $w={41}>Paths</Tab>
                                    <HeadMenu>
                                        <PanelMenuIcon />
                                    </HeadMenu>
                                </PanelHead>
                                <LayerControl $h={28}>
                                    <SelectBox $w={70} $dim>
                                        <Svg $w={10} $h={10} viewBox='0 0 10 10'>
                                            <circle cx='6' cy='4' r='3' fill='none' stroke='#999' />
                                            <path d='M4 6L1 9' stroke='#999' strokeWidth='1.300' />
                                        </Svg>
                                        Kind
                                        <Stepper />
                                    </SelectBox>
                                    <FilterGap $w={6} />
                                    <FilterIcon>
                                        <Svg $w={14} $h={12} viewBox='0 0 14 12'>
                                            <rect x='0.500' y='0.500' width='13' height='11' fill='none' stroke='#8b8b8b' />
                                            <path d='M2 10l3-4 2 2 3-4 2 6z' fill='#8b8b8b' />
                                        </Svg>
                                    </FilterIcon>
                                    <FilterIcon>
                                        <Svg $w={12} $h={12} viewBox='0 0 12 12'>
                                            <circle cx='6' cy='6' r='5.500' fill='#8b8b8b' />
                                            <path d='M9.500 2.500A5 5 0 0 1 2.500 9.500z' fill='#3f3f3f' />
                                        </Svg>
                                    </FilterIcon>
                                    <FilterIcon>T</FilterIcon>
                                    <FilterIcon>
                                        <Svg $w={13} $h={13} viewBox='0 0 13 13'>
                                            <rect x='2' y='2' width='9' height='9' fill='none' stroke='#8b8b8b' />
                                            <path d='M0 0h3v3H0zM10 0h3v3h-3zM0 10h3v3H0zM10 10h3v3h-3z' fill='#8b8b8b' />
                                        </Svg>
                                    </FilterIcon>
                                    <FilterIcon>
                                        <Svg $w={12} $h={14} viewBox='0 0 12 14'>
                                            <path d='M5 .500h4l2.500 2.500v10.500H5z' fill='none' stroke='#8b8b8b' />
                                            <rect x='0' y='7' width='6' height='7' fill='#8b8b8b' />
                                        </Svg>
                                    </FilterIcon>
                                    <FilterToggle />
                                </LayerControl>
                                <LayerControl $h={29}>
                                    <SelectBox $w={110} $dim>
                                        Normal
                                        <Stepper />
                                    </SelectBox>
                                    <DimLabel $ml={8}>Opacity:</DimLabel>
                                    <DimInput>100%</DimInput>
                                    <DimArrow>
                                        <Svg $w={7} $h={4} viewBox='0 0 7 4'>
                                            <path d='M0 0h7L3.500 4z' fill='#bdbdbd' />
                                        </Svg>
                                    </DimArrow>
                                </LayerControl>
                                <LayerControl $h={29}>
                                    <DimLabel $ml={2}>Lock:</DimLabel>
                                    <FilterGap $w={6} />
                                    <LockIcon>
                                        <Svg $w={12} $h={12} viewBox='0 0 12 12'>
                                            <rect width='12' height='12' fill='#6e6e6e' />
                                            <path d='M0 0h4v4H0zM8 0h4v4H8zM4 4h4v4H4zM0 8h4v4H0zM8 8h4v4H8z' fill='#a0a0a0' />
                                        </Svg>
                                    </LockIcon>
                                    <LockIcon>
                                        <Svg $w={16} $h={14} viewBox='0 0 16 14'>
                                            <path d='M16 0L6 9l2 2z' fill='#909090' />
                                            <path d='M5 9c-2 0-2 3-5 4 3 1 7 0 7-2z' fill='#a0a0a0' />
                                        </Svg>
                                    </LockIcon>
                                    <LockIcon>
                                        <Svg $w={13} $h={13} viewBox='0 0 13 13'>
                                            <path d='M6.500 1v11M1 6.500h11M6.500 0L4.500 2.500h4zM6.500 13l-2-2.500h4zM0 6.500L2.500 4.500v4zM13 6.500l-2.500-2v4z' stroke='#8f8f8f' strokeWidth='0.800' fill='#8f8f8f' />
                                        </Svg>
                                    </LockIcon>
                                    <LockIcon>
                                        <Svg $w={11} $h={13} viewBox='0 0 11 13'>
                                            <path d='M3 6V3.500a2.500 2.500 0 0 1 5 0V6' fill='none' stroke='#8f8f8f' strokeWidth='1.300' />
                                            <rect x='1' y='6' width='9' height='7' fill='#8f8f8f' />
                                        </Svg>
                                    </LockIcon>
                                    <DimLabel $ml={22}>Fill:</DimLabel>
                                    <DimInput>100%</DimInput>
                                    <DimArrow>
                                        <Svg $w={7} $h={4} viewBox='0 0 7 4'>
                                            <path d='M0 0h7L3.500 4z' fill='#bdbdbd' />
                                        </Svg>
                                    </DimArrow>
                                </LayerControl>
                                <LayerList>
                                    <LayerColumn>
                                        <LayerRow>
                                            <EyeCell>
                                                <Svg $w={13} $h={9} viewBox='0 0 13 9'>
                                                    <path d='M0 4.500C3 0 10 0 13 4.500 10 9 3 9 0 4.500z' fill='#b4b4b4' />
                                                    <circle cx='6.500' cy='4' r='2.300' fill='#3c3c3c' />
                                                </Svg>
                                            </EyeCell>
                                            <LayerThumb />
                                            <LayerName>Background</LayerName>
                                            <LayerLock>
                                                <SmallLock color='#d8d8d8' />
                                            </LayerLock>
                                        </LayerRow>
                                    </LayerColumn>
                                    <LayerScroll />
                                </LayerList>
                                <LayerFooter>
                                    <FooterCell>
                                        <Svg $w={15} $h={9} viewBox='0 0 15 9'>
                                            <path d='M6 1H4a3.500 3.500 0 0 0 0 7h2M9 1h2a3.500 3.500 0 0 1 0 7H9M4 4.500h7' fill='none' stroke='#838383' strokeWidth='1.400' />
                                        </Svg>
                                    </FooterCell>
                                    <FooterCell>
                                        <FxLabel>fx</FxLabel>
                                    </FooterCell>
                                    <FooterCell>
                                        <Svg $w={13} $h={11} viewBox='0 0 13 11'>
                                            <rect width='13' height='11' fill='#bdbdbd' />
                                            <circle cx='6.500' cy='5.500' r='2.500' fill='#4a4a4a' />
                                        </Svg>
                                    </FooterCell>
                                    <FooterCell>
                                        <Svg $w={12} $h={12} viewBox='0 0 12 12'>
                                            <circle cx='6' cy='6' r='5.500' fill='#bdbdbd' />
                                            <path d='M10 2L2 10' stroke='#4a4a4a' strokeWidth='1.400' />
                                            <path d='M9.800 2.400A5 5 0 0 1 2.400 9.800z' fill='#6b6b6b' />
                                        </Svg>
                                    </FooterCell>
                                    <FooterCell>
                                        <Svg $w={13} $h={11} viewBox='0 0 13 11'>
                                            <path d='M0 0h5l1 2h7v9H0z' fill='url(#toolGrey)' />
                                        </Svg>
                                    </FooterCell>
                                    <FooterCell>
                                        <Svg $w={11} $h={11} viewBox='0 0 11 11'>
                                            <path d='M3 0h8v11H3V6H0z' fill='#bdbdbd' />
                                            <path d='M1 6h3v3' fill='none' stroke='#333' />
                                        </Svg>
                                    </FooterCell>
                                    <FooterCell>
                                        <Svg $w={11} $h={13} viewBox='0 0 11 13'>
                                            <path d='M0 2.500h11M4 2.500V.800h3v1.700M1.500 4v8.500h8V4M4 5v6M7 5v6' fill='none' stroke='#838383' />
                                        </Svg>
                                    </FooterCell>
                                </LayerFooter>
                            </Panel>
                        </PanelColumn>
                    </SideRow>
                </Side>
            </Workspace>
        </Root>
    );
};

export default App;
